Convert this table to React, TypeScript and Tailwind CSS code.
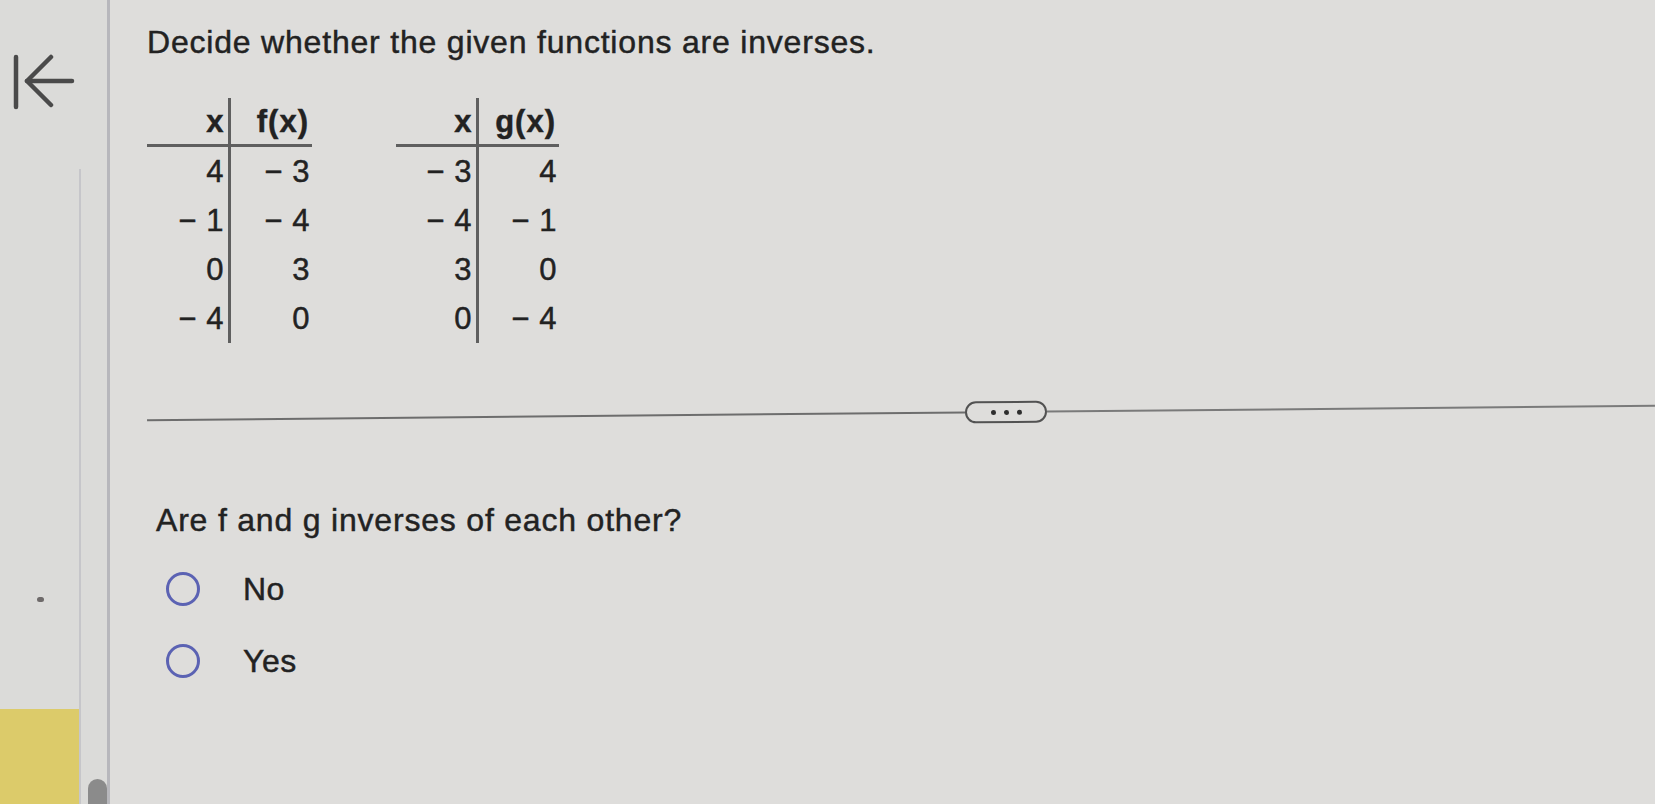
import { FC } from 'react';

const font = { fontFamily: '"Liberation Sans", Arial, sans-serif' };

const BackIcon: FC = () => (
  <svg width="62" height="56" viewBox="0 0 62 56" fill="none" stroke="#4a4a4a" strokeWidth="4.5" strokeLinecap="round" strokeLinejoin="round">
    <path d="M3 3v50" />
    <path d="M14 27h45" />
    <path d="M38 3L14 27l24 24" />
  </svg>
);

type Row = [string, string];

const ValueTable: FC<{ head: string; rows: Row[]; w1: string; w2: string }> = ({ head, rows, w1, w2 }) => (
  <div className="flex">
    <div className={`${w1} flex flex-col border-r-[3px] border-[#5f5f5f]`}>
      <div className="h-[49px] flex items-end justify-end pr-[4px] pb-[7px] border-b-[3px] border-[#5f5f5f] font-bold">x</div>
      {rows.map((r, i) => (
        <div key={i} className="h-[49px] flex items-center justify-end pr-[4px]">
          {r[0]}
        </div>
      ))}
    </div>
    <div className={`${w2} flex flex-col`}>
      <div className="h-[49px] flex items-end justify-end pr-[3px] pb-[7px] border-b-[3px] border-[#5f5f5f] font-bold tracking-[1px]">{head}</div>
      {rows.map((r, i) => (
        <div key={i} className="h-[49px] flex items-center justify-end pr-[2px]">
          {r[1]}
        </div>
      ))}
    </div>
  </div>
);

const Radio: FC<{ label: string }> = ({ label }) => (
  <div className="h-[38px] flex items-center pl-[19px]">
    <span className="w-[34px] h-[34px] rounded-full border-[3px] border-[#5b62b3]" />
    <span className="ml-[43px] leading-[38px]">{label}</span>
  </div>
);

const App: FC = () => {
  const f: Row[] = [
    ['4', '− 3'],
    ['− 1', '− 4'],
    ['0', '3'],
    ['− 4', '0'],
  ];
  const g: Row[] = [
    ['− 3', '4'],
    ['− 4', '− 1'],
    ['3', '0'],
    ['0', '− 4'],
  ];

  return (
    <div
      className="w-[1655px] h-[804px] flex overflow-hidden bg-[#dedddb] text-[#222] [-webkit-text-stroke:0.45px_#222]"
      style={font}
    >
      {/* sidebar */}
      <div className="w-[110px] flex flex-col border-r-[3px] border-[#b7b7bc] bg-[#dbdbd9]">
        <div className="h-[169px] pt-[54px] pl-[13px]">
          <BackIcon />
        </div>
        <div className="flex-1 flex">
          <div className="w-[81px] flex flex-col border-r-2 border-[#c6c6ca]">
            <div className="h-[433px] flex items-end pl-[37px]">
              <span className="w-[7px] h-[5px] rounded-sm bg-[#6e6a6a]" />
            </div>
            <div className="flex-1" />
            <div className="h-[95px] bg-[#dccb6a]" />
          </div>
          <div className="flex-1 flex flex-col justify-end items-end">
            <div className="w-[19px] h-[25px] rounded-t-full bg-[#8b8b8b]" />
          </div>
        </div>
      </div>

      {/* main */}
      <div className="flex-1 flex flex-col pl-[37px] pt-[23px]">
        <h1 className="text-[32px] leading-[38px] tracking-[0.8px]">Decide whether the given functions are inverses.</h1>

        <div className="mt-[37px] flex gap-[84px] text-[31px] leading-none tracking-[0.6px]">
          <ValueTable head="f(x)" rows={f} w1="w-[84px]" w2="w-[81px]" />
          <ValueTable head="g(x)" rows={g} w1="w-[83px]" w2="w-[80px]" />
        </div>

        <div className="mt-[59px] h-[22px] flex items-center -rotate-[0.55deg]">
          <div className="w-[818px] h-[2px] bg-[#6d6d6d]" />
          <div className="w-[82px] h-[22px] rounded-full border-2 border-[#525252] flex items-center justify-center gap-[8px]">
            <span className="w-[5px] h-[5px] rounded-full bg-[#2e2e2e]" />
            <span className="w-[5px] h-[5px] rounded-full bg-[#2e2e2e]" />
            <span className="w-[5px] h-[5px] rounded-full bg-[#2e2e2e]" />
          </div>
          <div className="flex-1 h-[2px] bg-[#7a7a7a]" />
        </div>

        <p className="mt-[77px] pl-[9px] text-[32px] leading-[38px] tracking-[0.8px]">Are f and g inverses of each other?</p>

        <div className="mt-[31px] flex flex-col gap-[34px] text-[32px] tracking-[0.5px]">
          <Radio label="No" />
          <Radio label="Yes" />
        </div>
      </div>
    </div>
  );
};

export default App;
